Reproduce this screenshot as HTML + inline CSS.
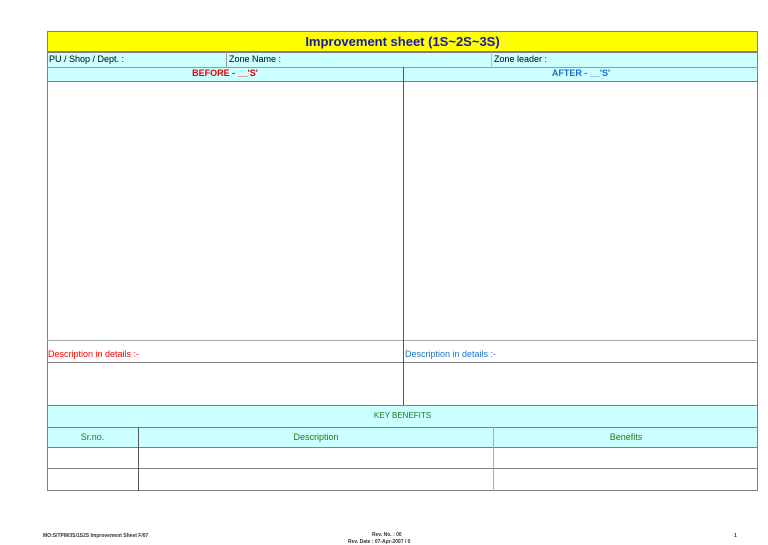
<!DOCTYPE html>
<html><head><style>
body{margin:0;width:768px;height:543px;background:#fff;position:relative;overflow:hidden;font-family:"Liberation Sans",sans-serif;}
div{position:absolute;box-sizing:border-box;}
.t{font-size:9px;line-height:1;white-space:nowrap;}
.hl{height:1px;background:#808080;}
.vl{width:1px;background:#555;}
</style></head><body>
<div style="left:47px;top:31px;width:711px;height:21px;background:#ffff00;border:1px solid #808080;"></div>
<div class="t" style="left:47px;top:35px;width:711px;text-align:center;font-size:13px;font-weight:bold;color:#1a1aa0;">Improvement sheet (1S~2S~3S)</div>
<div style="left:47px;top:52px;width:711px;height:29px;background:#ccffff;"></div>
<div style="left:47px;top:81px;width:711px;height:324px;background:#fff;"></div>
<div style="left:47px;top:405px;width:711px;height:42px;background:#ccffff;"></div>
<!-- outer border -->
<div style="left:47px;top:31px;width:711px;height:460px;border:1px solid #808080;"></div>
<!-- horizontal lines -->
<div class="hl" style="left:47px;top:52px;width:711px;"></div>
<div class="hl" style="left:47px;top:67px;width:711px;background:#999;"></div>
<div class="hl" style="left:47px;top:81px;width:711px;"></div>
<div class="hl" style="left:47px;top:340px;width:711px;background:#aaa;"></div>
<div class="hl" style="left:47px;top:362px;width:711px;"></div>
<div class="hl" style="left:47px;top:405px;width:711px;"></div>
<div class="hl" style="left:47px;top:427px;width:711px;"></div>
<div class="hl" style="left:47px;top:447px;width:711px;"></div>
<div class="hl" style="left:47px;top:468px;width:711px;"></div>
<!-- verticals -->
<div class="vl" style="left:226px;top:52px;height:15px;background:#999;"></div>
<div class="vl" style="left:491px;top:52px;height:15px;background:#bbb;"></div>
<div class="vl" style="left:403px;top:67px;height:338px;"></div>
<div class="vl" style="left:138px;top:427px;height:64px;"></div>
<div class="vl" style="left:493px;top:427px;height:64px;background:#aaa;"></div>
<!-- text -->
<div class="t" style="left:49px;top:55px;">PU / Shop / Dept. :</div>
<div class="t" style="left:229px;top:55px;">Zone Name :</div>
<div class="t" style="left:494px;top:55px;">Zone leader :</div>
<div class="t" style="left:47px;top:69px;width:356px;text-align:center;font-weight:bold;color:#e00000;">BEFORE - __'S'</div>
<div class="t" style="left:404px;top:69px;width:354px;text-align:center;font-weight:bold;color:#1a6fd0;">AFTER - __'S'</div>
<div class="t" style="left:48px;top:350px;color:#ff0000;">Description in details :-</div>
<div class="t" style="left:405px;top:350px;color:#1a6fd0;">Description in details :-</div>
<div class="t" style="left:47px;top:412px;width:711px;text-align:center;color:#1a7a1a;font-size:8px;">KEY BENEFITS</div>
<div class="t" style="left:47px;top:433px;width:91px;text-align:center;color:#1a7a1a;">Sr.no.</div>
<div class="t" style="left:139px;top:433px;width:354px;text-align:center;color:#1a7a1a;">Description</div>
<div class="t" style="left:494px;top:433px;width:264px;text-align:center;color:#1a7a1a;">Benefits</div>
<div class="t" style="left:43px;top:534px;font-size:5px;font-weight:bold;color:#333;">MO:S/TPM/3S/1S2S Improvement Sheet F/07</div>
<div class="t" style="left:372px;top:533px;font-size:5px;font-weight:bold;color:#333;">Rev. No. : 00</div>
<div class="t" style="left:348px;top:540px;font-size:5px;font-weight:bold;color:#333;">Rev. Date : 07-Apr-2007 / 0</div>
<div class="t" style="left:734px;top:534px;font-size:5px;font-weight:bold;color:#333;">1</div>
</body></html>
